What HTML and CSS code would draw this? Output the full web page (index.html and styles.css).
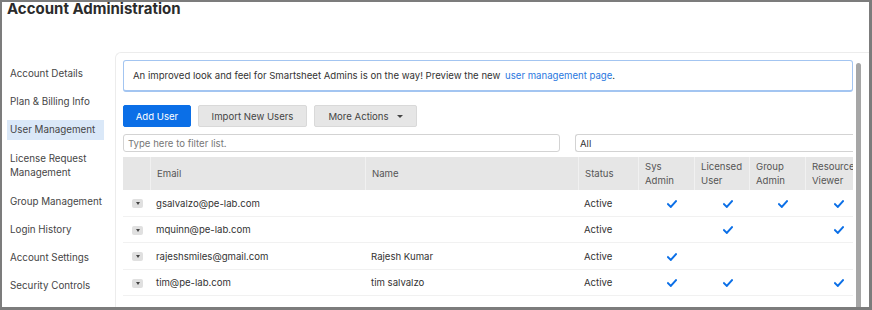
FILE: index.html
```html
<!DOCTYPE html>
<html lang="en">
<head>
<meta charset="utf-8">
<title>Account Administration</title>
<link rel="stylesheet" href="styles.css">
</head>
<body>
<div class="frame">
  <h1 class="title">Account Administration</h1>
  <div class="main">
    <nav class="sidebar">
      <div class="nav-item">Account Details</div>
      <div class="nav-item">Plan &amp; Billing Info</div>
      <div class="nav-item active">User Management</div>
      <div class="nav-item two">License Request<br>Management</div>
      <div class="nav-item">Group Management</div>
      <div class="nav-item">Login History</div>
      <div class="nav-item">Account Settings</div>
      <div class="nav-item">Security Controls</div>
    </nav>
    <section class="panel">
      <div class="content">
        <div class="banner">An improved look and feel for Smartsheet Admins is on the way! Preview the new <a class="link" href="#">user management page</a>.</div>
        <div class="toolbar">
          <button class="btn primary">Add User</button>
          <button class="btn import">Import New Users</button>
          <button class="btn more">More Actions <span class="caret"></span></button>
        </div>
        <div class="filters">
          <div class="filter-input">Type here to filter list.</div>
          <div class="filter-select">All</div>
        </div>
        <div class="table">
          <div class="row head">
            <div class="cell"></div>
            <div class="cell">Email</div>
            <div class="cell">Name</div>
            <div class="cell">Status</div>
            <div class="cell">Sys<br>Admin</div>
            <div class="cell">Licensed<br>User</div>
            <div class="cell">Group<br>Admin</div>
            <div class="cell">Resource<br>Viewer</div>
          </div>
          <div class="row">
            <div class="cell menu"><span class="drop"></span></div>
            <div class="cell">gsalvalzo@pe-lab.com</div>
            <div class="cell"></div>
            <div class="cell">Active</div>
            <div class="cell check"><svg viewBox="0 0 10 8" width="10" height="8"><path d="M1 4.2L3.8 6.9L9 1.2"/></svg></div>
            <div class="cell check"><svg viewBox="0 0 10 8" width="10" height="8"><path d="M1 4.2L3.8 6.9L9 1.2"/></svg></div>
            <div class="cell check"><svg viewBox="0 0 10 8" width="10" height="8"><path d="M1 4.2L3.8 6.9L9 1.2"/></svg></div>
            <div class="cell check"><svg viewBox="0 0 10 8" width="10" height="8"><path d="M1 4.2L3.8 6.9L9 1.2"/></svg></div>
          </div>
          <div class="row">
            <div class="cell menu"><span class="drop"></span></div>
            <div class="cell">mquinn@pe-lab.com</div>
            <div class="cell"></div>
            <div class="cell">Active</div>
            <div class="cell check"></div>
            <div class="cell check"><svg viewBox="0 0 10 8" width="10" height="8"><path d="M1 4.2L3.8 6.9L9 1.2"/></svg></div>
            <div class="cell check"></div>
            <div class="cell check"><svg viewBox="0 0 10 8" width="10" height="8"><path d="M1 4.2L3.8 6.9L9 1.2"/></svg></div>
          </div>
          <div class="row">
            <div class="cell menu"><span class="drop"></span></div>
            <div class="cell">rajeshsmiles@gmail.com</div>
            <div class="cell">Rajesh Kumar</div>
            <div class="cell">Active</div>
            <div class="cell check"><svg viewBox="0 0 10 8" width="10" height="8"><path d="M1 4.2L3.8 6.9L9 1.2"/></svg></div>
            <div class="cell check"></div>
            <div class="cell check"></div>
            <div class="cell check"></div>
          </div>
          <div class="row">
            <div class="cell menu"><span class="drop"></span></div>
            <div class="cell">tim@pe-lab.com</div>
            <div class="cell">tim salvalzo</div>
            <div class="cell">Active</div>
            <div class="cell check"><svg viewBox="0 0 10 8" width="10" height="8"><path d="M1 4.2L3.8 6.9L9 1.2"/></svg></div>
            <div class="cell check"><svg viewBox="0 0 10 8" width="10" height="8"><path d="M1 4.2L3.8 6.9L9 1.2"/></svg></div>
            <div class="cell check"></div>
            <div class="cell check"><svg viewBox="0 0 10 8" width="10" height="8"><path d="M1 4.2L3.8 6.9L9 1.2"/></svg></div>
          </div>
        </div>
      </div>
      <div class="scrolltrack"><div class="thumb"></div></div>
    </section>
  </div>
</div>
</body>
</html>
```

FILE: styles.css
```css
* { box-sizing: border-box; }
html, body { margin: 0; padding: 0; background: #fff; }
body { font-family: Inter, "Noto Sans", sans-serif; font-size: 9.6px; color: #333; }

.frame {
  width: 872px;
  height: 310px;
  border: 2px solid #7c7c7c;
  border-right-width: 3px;
  border-bottom-width: 3px;
  overflow: hidden;
  display: flex;
  flex-direction: column;
  background: #fff;
}

.title {
  margin: 0 0 36px 0;
  padding-left: 5px;
  font-size: 15px;
  line-height: 14px;
  font-weight: 700;
  color: #2b2b2b;
}

.main {
  flex: 1;
  display: flex;
  min-height: 0;
}

.sidebar {
  width: 113px;
  flex: none;
  padding: 12px 0 0 5px;
}

.nav-item {
  width: 97px;
  padding: 3px 3px;
  line-height: 14px;
  margin-bottom: 8px;
  color: #454545;
  white-space: nowrap;
  font-size: 9.8px;
}
.nav-item.two { margin-bottom: 9px; padding-top: 4px; }
.nav-item.active { background: #dae8f8; }

.panel {
  flex: 1;
  display: flex;
  border-left: 1px solid #ececec;
  border-top: 1px solid #ececec;
  border-top-left-radius: 6px;
  min-width: 0;
}

.content {
  width: 737px;
  flex: none;
  padding: 7px 0 0 7px;
  display: flex;
  flex-direction: column;
}

.banner {
  height: 32px;
  border: 1px solid #a3c5f1;
  border-bottom-width: 2px;
  border-radius: 3px;
  padding: 0 9px;
  display: flex;
  align-items: center;
  white-space: pre;
  color: #333;
}
.link { color: #2a78e0; text-decoration: none; margin-left: 2px; }

.toolbar {
  margin-top: 13px;
  display: flex;
  gap: 7px;
}
.btn {
  height: 22px;
  padding: 0;
  border: 1px solid #d9d9d9;
  background: #e6e6e6;
  border-radius: 2px;
  font-family: inherit;
  font-size: 9.6px;
  color: #444;
  display: flex;
  align-items: center;
  justify-content: center;
  white-space: nowrap;
}
.btn.primary {
  background: #0b6fe7;
  border-color: #0b6fe7;
  color: #fff;
  width: 68px;
}
.btn.import { width: 109px; }
.btn.more { width: 103px; }
.caret {
  margin-left: 8px;
  width: 0;
  height: 0;
  border-left: 3px solid transparent;
  border-right: 3px solid transparent;
  border-top: 3px solid #444;
}

.filters {
  margin-top: 7px;
  display: flex;
  gap: 15px;
  height: 18px;
}
.filter-input, .filter-select {
  border: 1px solid #d3d3d3;
  border-radius: 3px;
  padding: 0 4px;
  display: flex;
  align-items: center;
}
.filter-input { width: 437px; color: #777; }
.filter-select { flex: 1; color: #333; border-right: none; border-radius: 3px 0 0 3px; }

.table {
  margin-top: 5px;
  overflow: hidden;
}
.row {
  display: grid;
  grid-template-columns: 27px 215px 213px 60px 56px 55px 56px 70px;
  height: 26.5px;
  border-bottom: 1px solid #f1f1f1;
}
.row.head {
  height: 33px;
  background: #e6e6e6;
  border-bottom: none;
  color: #555;
}
.cell {
  display: flex;
  align-items: center;
  padding-left: 6px;
  line-height: 14px;
  white-space: nowrap;
  overflow: hidden;
}
.row:not(.head) .cell { padding-top: 1.5px; }
.row.head .cell + .cell { border-left: 1px solid #f1f1f1; }
.cell.menu { padding-left: 9px; }
.drop {
  width: 11px;
  height: 9px;
  background: #e0e0e0;
  border-radius: 2px;
  display: flex;
  align-items: center;
  justify-content: center;
}
.drop::after {
  content: "";
  width: 0;
  height: 0;
  border-left: 2.5px solid transparent;
  border-right: 2.5px solid transparent;
  border-top: 3px solid #444;
}
.cell.check { padding-left: 29px; }
.cell.check svg path {
  fill: none;
  stroke: #0b6fe7;
  stroke-width: 2;
  stroke-linecap: square;
  stroke-linejoin: miter;
}

.scrolltrack {
  flex: 1;
  padding: 10px 0 0 3px;
}
.thumb {
  width: 5px;
  height: 100%;
  background: #a6a6a6;
  border-radius: 3px 3px 0 0;
}
```
